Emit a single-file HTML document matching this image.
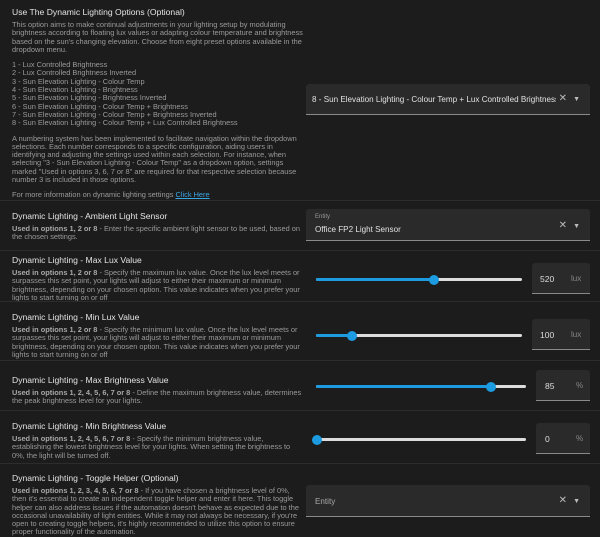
<!DOCTYPE html>
<html><head><style>
*{margin:0;padding:0;box-sizing:border-box}
body{width:600px;height:536px;background:#1c1c1c;font-family:"Liberation Sans",sans-serif;color:#e1e1e1;position:relative;overflow:hidden}
.row{position:absolute;left:0;width:600px;border-top:1px solid #2c2c2c}
.l{position:absolute;left:12px;width:290px}
.t{font-size:8.6px;color:#e4e4e4;margin-bottom:4px}
.d{font-size:7.4px;line-height:8.3px;color:#9a9a9a}
.d b{color:#a8a8a8}
.d p{margin-bottom:7px}
a{color:#3ba8e6;text-decoration:underline}
.box{position:absolute;background:#2a2a2a;border-bottom:1px solid #8a8a8a;border-radius:3px 3px 0 0}
.sel{font-size:8.1px;color:#e1e1e1;position:absolute;left:7px}
.ic{position:absolute;right:10px;font-size:10px;color:#bbb}
.ic span{margin-left:6px;font-size:7px}
.track{position:absolute;height:3px;background:#dcdcdc;border-radius:2px}
.fill{position:absolute;left:0;top:0;height:3px;background:#1d9be0;border-radius:2px}
.knob{position:absolute;width:10px;height:10px;border-radius:50%;background:#1d9be0;top:-3.5px}
.val{position:absolute;font-size:8.5px;color:#ddd}
.unit{position:absolute;font-size:8px;color:#888}
</style></head><body>

<div class="row" style="top:0;height:200px;border-top:none">
 <div class="l" style="top:7px;width:292px">
  <div class="t">Use The Dynamic Lighting Options (Optional)</div>
  <div class="d">
   <p>This option aims to make continual adjustments in your lighting setup by modulating brightness according to floating lux values or adapting colour temperature and brightness based on the sun's changing elevation. Choose from eight preset options available in the dropdown menu.</p>
   <p>1 - Lux Controlled Brightness<br>2 - Lux Controlled Brightness Inverted<br>3 - Sun Elevation Lighting - Colour Temp<br>4 - Sun Elevation Lighting - Brightness<br>5 - Sun Elevation Lighting - Brightness Inverted<br>6 - Sun Elevation Lighting - Colour Temp + Brightness<br>7 - Sun Elevation Lighting - Colour Temp + Brightness Inverted<br>8 - Sun Elevation Lighting - Colour Temp + Lux Controlled Brightness</p>
   <p>A numbering system has been implemented to facilitate navigation within the dropdown selections. Each number corresponds to a specific configuration, aiding users in identifying and adjusting the settings used within each selection. For instance, when selecting "3 - Sun Elevation Lighting - Colour Temp" as a dropdown option, settings marked "Used in options 3, 6, 7 or 8" are required for that respective selection because number 3 is included in those options.</p>
   <p>For more information on dynamic lighting settings <a>Click Here</a></p>
  </div>
 </div>
 <div class="box" style="left:306px;top:84px;width:284px;height:31px">
  <div class="sel" style="top:11px;left:6px;width:244px;white-space:nowrap;overflow:hidden">8 - Sun Elevation Lighting - Colour Temp + Lux Controlled Brightness</div>
  <div class="ic" style="top:9px">✕<span>▼</span></div>
 </div>
</div>

<div class="row" style="top:200px;height:50px">
 <div class="l" style="top:10px">
  <div class="t">Dynamic Lighting - Ambient Light Sensor</div>
  <div class="d"><b>Used in options 1, 2 or 8</b> - Enter the specific ambient light sensor to be used, based on the chosen settings.</div>
 </div>
 <div class="box" style="left:306px;top:8px;width:284px;height:32px">
  <div style="position:absolute;left:9px;top:5px;font-size:6px;color:#999">Entity</div>
  <div class="sel" style="top:16px;left:9px">Office FP2 Light Sensor</div>
  <div class="ic" style="top:11px">✕<span>▼</span></div>
 </div>
</div>

<div class="row" style="top:250px;height:51px">
 <div class="l" style="top:4px">
  <div class="t">Dynamic Lighting - Max Lux Value</div>
  <div class="d"><b>Used in options 1, 2 or 8</b> - Specify the maximum lux value. Once the lux level meets or surpasses this set point, your lights will adjust to either their maximum or minimum brightness, depending on your chosen option. This value indicates when you prefer your lights to start turning on or off</div>
 </div>
 <div class="track" style="left:316px;top:27px;width:206px"><div class="fill" style="width:118px"></div><div class="knob" style="left:113px"></div></div>
 <div class="box" style="left:532px;top:12px;width:58px;height:31px"><div class="val" style="left:8px;top:11px">520</div><div class="unit" style="left:39px;top:11px">lux</div></div>
</div>

<div class="row" style="top:301px;height:59px">
 <div class="l" style="top:10px">
  <div class="t">Dynamic Lighting - Min Lux Value</div>
  <div class="d"><b>Used in options 1, 2 or 8</b> - Specify the minimum lux value. Once the lux level meets or surpasses this set point, your lights will adjust to either their maximum or minimum brightness, depending on your chosen option. This value indicates when you prefer your lights to start turning on or off</div>
 </div>
 <div class="track" style="left:316px;top:32px;width:206px"><div class="fill" style="width:36px"></div><div class="knob" style="left:31px"></div></div>
 <div class="box" style="left:532px;top:17px;width:58px;height:31px"><div class="val" style="left:8px;top:11px">100</div><div class="unit" style="left:39px;top:11px">lux</div></div>
</div>

<div class="row" style="top:360px;height:50px">
 <div class="l" style="top:14px">
  <div class="t">Dynamic Lighting - Max Brightness Value</div>
  <div class="d"><b>Used in options 1, 2, 4, 5, 6, 7 or 8</b> - Define the maximum brightness value, determines the peak brightness level for your lights.</div>
 </div>
 <div class="track" style="left:316px;top:24px;width:210px"><div class="fill" style="width:175px"></div><div class="knob" style="left:170px"></div></div>
 <div class="box" style="left:536px;top:9px;width:54px;height:31px"><div class="val" style="left:9px;top:11px">85</div><div class="unit" style="left:40px;top:11px">%</div></div>
</div>

<div class="row" style="top:410px;height:53px">
 <div class="l" style="top:10px">
  <div class="t">Dynamic Lighting - Min Brightness Value</div>
  <div class="d"><b>Used in options 1, 2, 4, 5, 6, 7 or 8</b> - Specify the minimum brightness value, establishing the lowest brightness level for your lights. When setting the brightness to 0%, the light will be turned off.</div>
 </div>
 <div class="track" style="left:316px;top:27px;width:210px"><div class="fill" style="width:2px"></div><div class="knob" style="left:-4px"></div></div>
 <div class="box" style="left:536px;top:12px;width:54px;height:31px"><div class="val" style="left:9px;top:11px">0</div><div class="unit" style="left:40px;top:11px">%</div></div>
</div>

<div class="row" style="top:463px;height:73px">
 <div class="l" style="top:9px">
  <div class="t">Dynamic Lighting - Toggle Helper (Optional)</div>
  <div class="d"><b>Used in options 1, 2, 3, 4, 5, 6, 7 or 8</b> - If you have chosen a brightness level of 0%, then it's essential to create an independent toggle helper and enter it here. This toggle helper can also address issues if the automation doesn't behave as expected due to the occasional unavailability of light entities. While it may not always be necessary, if you're open to creating toggle helpers, it's highly recommended to utilize this option to ensure proper functionality of the automation.</div>
 </div>
 <div class="box" style="left:306px;top:21px;width:284px;height:32px">
  <div class="sel" style="top:12px;left:9px;color:#aaa">Entity</div>
  <div class="ic" style="top:10px">✕<span>▼</span></div>
 </div>
</div>
</body></html>
